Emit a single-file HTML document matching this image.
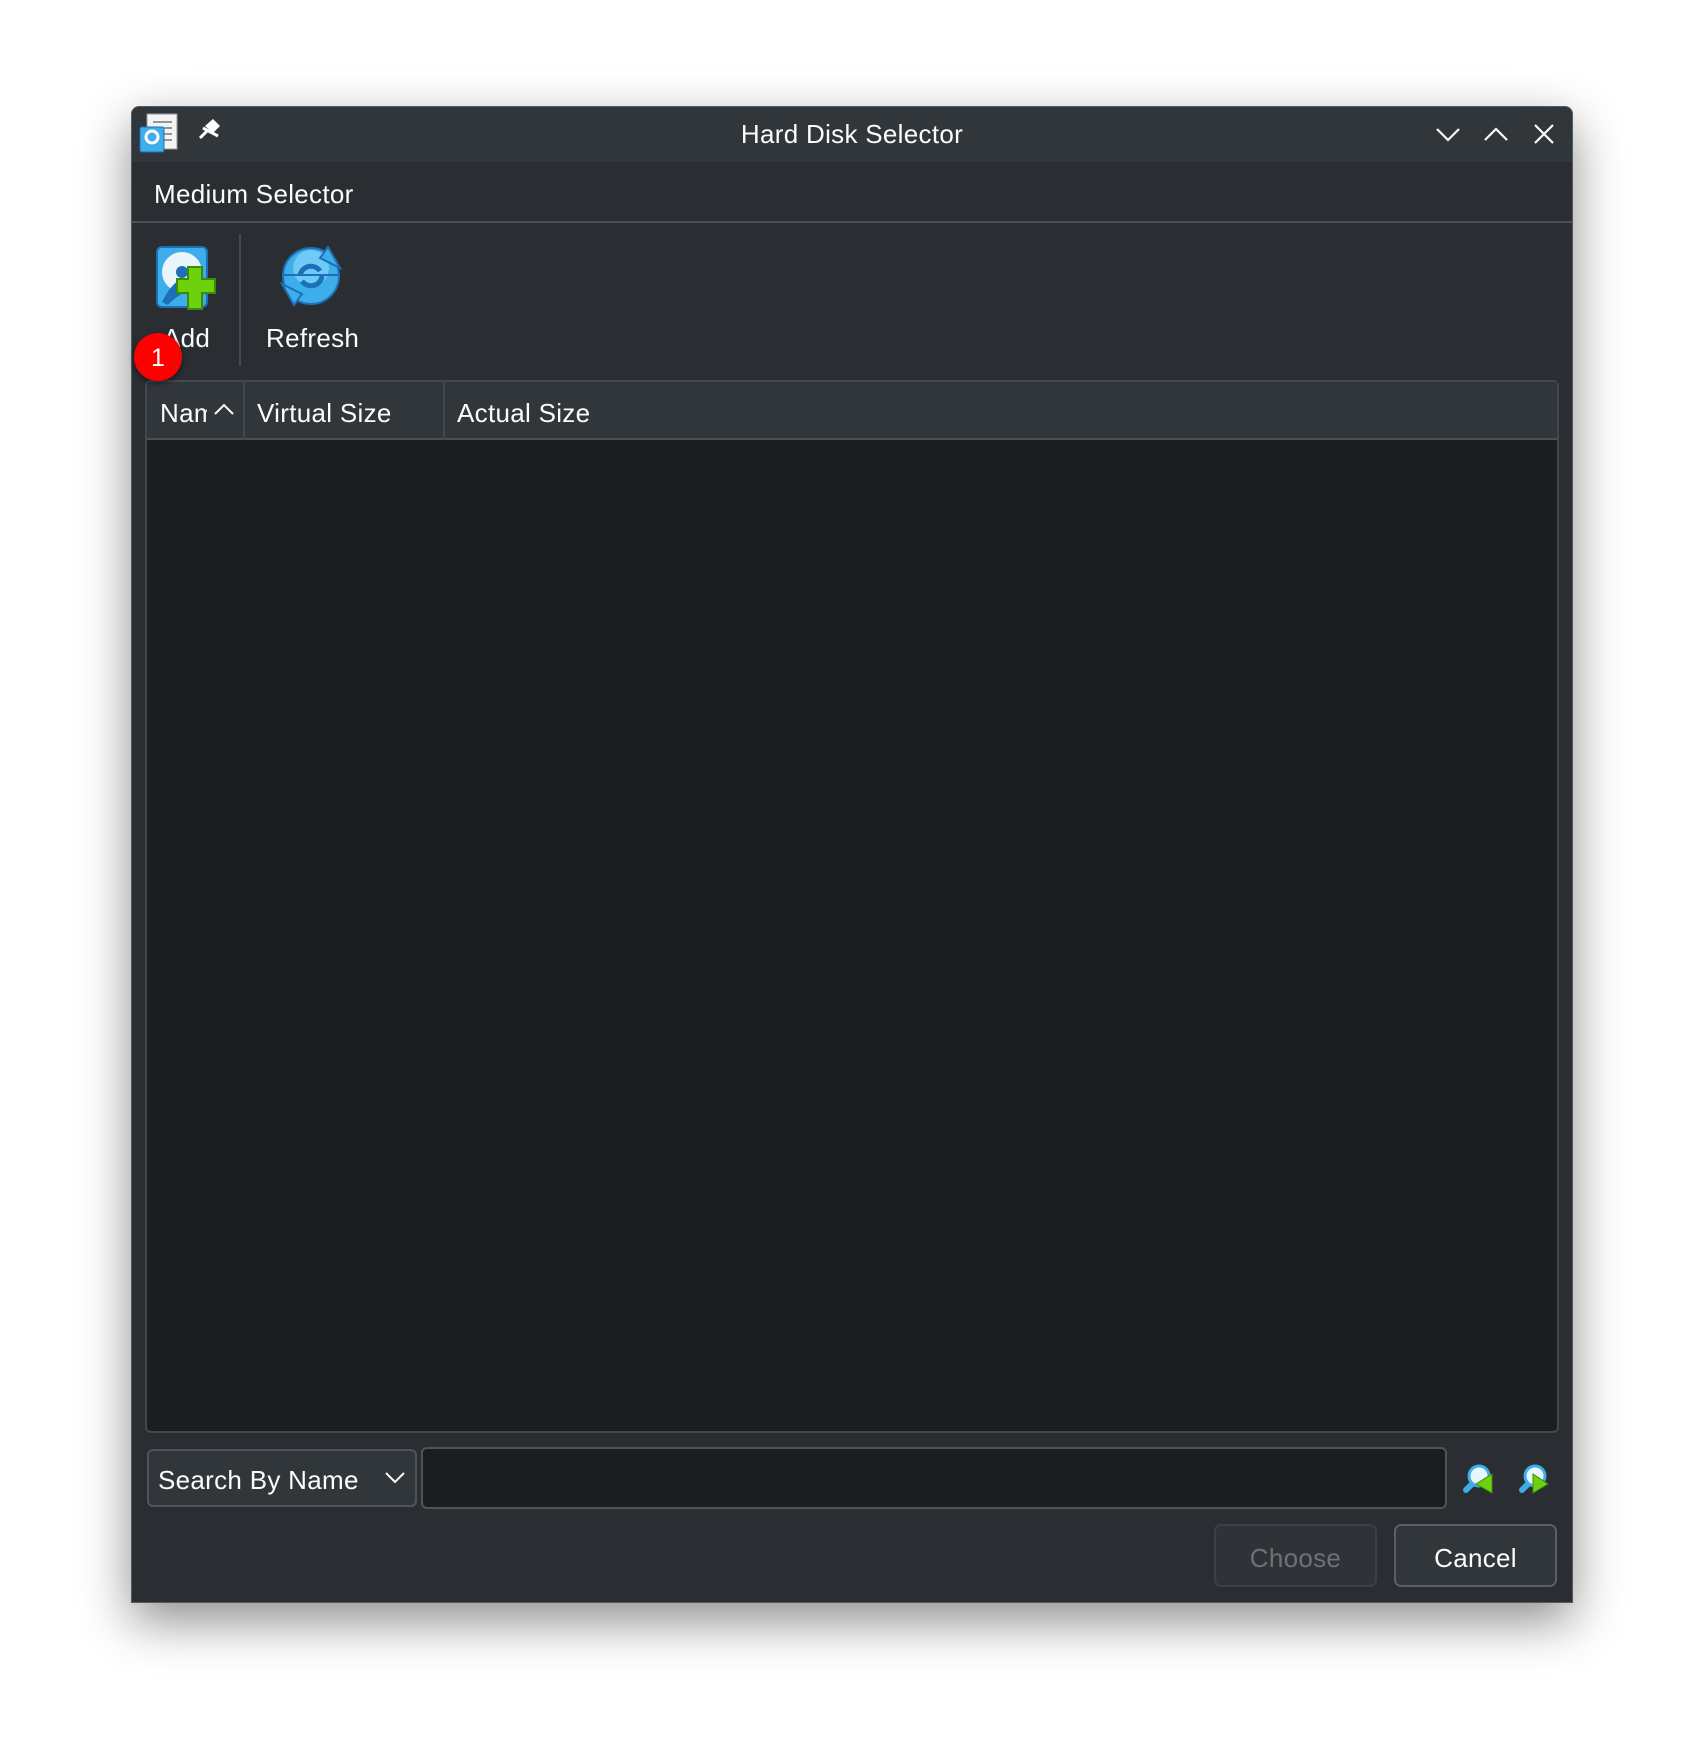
<!DOCTYPE html>
<html><head><meta charset="utf-8"><style>
*{box-sizing:border-box;margin:0;padding:0}
body{width:1704px;height:1758px;background:#fff;position:relative;overflow:hidden;font-family:"Liberation Sans","DejaVu Sans",sans-serif;color:#fcfcfc}
.a{position:absolute}
.win{left:131px;top:106px;width:1442px;height:1497px;background:#2a2e32;border:1px solid #555a5f;border-radius:8px 8px 0 0;box-shadow:0 18px 50px rgba(0,0,0,.45)}
.t{font-size:26px;white-space:nowrap;line-height:1;letter-spacing:.3px}
</style></head><body>
<div class="a win"></div>
<div class="a" style="left:132px;top:107px;width:1440px;height:55px;background:#31363b;border-radius:7px 7px 0 0"></div>
<div class="a t" style="left:0;width:1704px;text-align:center;top:121px;">Hard Disk Selector</div>
<div class="a t" style="left:154px;top:181px">Medium Selector</div>
<div class="a" style="left:132px;top:221px;width:1440px;height:2px;background:#4a4f54"></div>
<div class="a" style="left:239px;top:234px;width:2px;height:132px;background:#43484d"></div>
<div class="a t" style="left:163px;top:325px">Add</div>
<div class="a t" style="left:266px;top:325px">Refresh</div>
<!-- table -->
<div class="a" style="left:145px;top:380px;width:1414px;height:1053px;background:#1b1e20;border:2px solid #43484d;border-radius:6px"></div>
<div class="a" style="left:147px;top:382px;width:1410px;height:58px;background:#31363b;border-bottom:2px solid #4a4f54"></div>
<div class="a" style="left:243px;top:382px;width:2px;height:58px;background:#43484d"></div>
<div class="a" style="left:443px;top:382px;width:2px;height:58px;background:#43484d"></div>
<div class="a t" style="left:160px;top:400px;width:47px;overflow:hidden">Name</div>
<div class="a t" style="left:257px;top:400px">Virtual Size</div>
<div class="a t" style="left:457px;top:400px">Actual Size</div>
<!-- bottom -->
<div class="a" style="left:147px;top:1449px;width:270px;height:58px;background:#31363b;border:2px solid #4f5459;border-radius:6px"></div>
<div class="a t" style="left:158px;top:1467px">Search By Name</div>
<div class="a" style="left:421px;top:1447px;width:1026px;height:62px;background:#1b1e20;border:2px solid #4f5459;border-radius:6px"></div>
<div class="a" style="left:1214px;top:1524px;width:163px;height:63px;background:#2f3338;border:2px solid #3b4045;border-radius:7px"></div>
<div class="a t" style="left:1214px;width:163px;text-align:center;top:1545px;color:#6e7175">Choose</div>
<div class="a" style="left:1394px;top:1524px;width:163px;height:63px;background:#31363b;border:2px solid #5a5f64;border-radius:7px"></div>
<div class="a t" style="left:1394px;width:163px;text-align:center;top:1545px">Cancel</div>
<svg class="a" style="left:0;top:0" width="1704" height="1758">
 <rect x="147" y="114" width="30" height="35" fill="#f4f4f4" stroke="#999"/>
 <g stroke="#777" stroke-width="1.5"><line x1="153" y1="122" x2="172" y2="122"/><line x1="160" y1="128" x2="172" y2="128"/><line x1="162" y1="134" x2="172" y2="134"/><line x1="162" y1="140" x2="172" y2="140"/></g>
 <rect x="140" y="127" width="24" height="25" rx="2" fill="#3daee9" stroke="#1d6fb8"/>
 <circle cx="152" cy="137" r="6" fill="none" stroke="#fff" stroke-width="3"/>
 <path d="M200 138 L208 130" stroke="#fff" stroke-width="3"/>
 <path d="M205 126 L213 119 L220 126 L213 133 Z" fill="#fff"/>
 <path d="M203 128 L218 136" stroke="#fff" stroke-width="3"/>
 <g stroke="#fcfcfc" stroke-width="2.2" fill="none">
  <path d="M1437 129 L1448 140 L1459 129"/>
  <path d="M1485 140 L1496 129 L1507 140"/>
  <path d="M1535 125 L1553 143 M1553 125 L1535 143"/>
 </g>
 <rect x="157" y="247" width="50" height="60" rx="5" fill="#3daee9" stroke="#1d6fb8" stroke-width="2"/>
 <circle cx="182" cy="272" r="20" fill="#e9f4fb"/>
 <circle cx="182" cy="272" r="6" fill="#1d6fb8"/>
 <path d="M162 302 Q170 285 182 278 L188 290 Q175 297 168 305 Z" fill="#1d6fb8"/>
 <path d="M188 267 h14 v12 h13 v14 h-13 v16 h-14 v-16 h-11 v-14 h11 z" fill="#6cd20e" stroke="#3b8a08" stroke-width="2"/>
 <circle cx="311" cy="276" r="28" fill="#3daee9" stroke="#1d6fb8" stroke-width="2"/>
 <circle cx="311" cy="268" r="18" fill="#8fdcff" opacity=".6"/>
 <path d="M300 276 a11 11 0 0 1 20 -5 M322 276 a11 11 0 0 1 -20 5" stroke="#1d6fb8" stroke-width="5" fill="none"/>
 <line x1="282" y1="275" x2="340" y2="275" stroke="#1d6fb8" stroke-width="2"/>
 <path d="M328 247 L340 268 L320 258 Z" fill="#3daee9" stroke="#1d6fb8" stroke-width="2"/>
 <path d="M294 305 L282 284 L302 294 Z" fill="#3daee9" stroke="#1d6fb8" stroke-width="2"/>
 <circle cx="158" cy="357" r="24" fill="#f00" filter="drop-shadow(0 2px 3px rgba(0,0,0,.5))"/>
 <text x="158" y="366" font-size="25" text-anchor="middle" fill="#fff" font-family="Liberation Sans">1</text>
 <path d="M215 414 L224 405 L233 414" stroke="#fcfcfc" stroke-width="2" fill="none"/>
 <path d="M386 1473 L395 1482 L404 1473" stroke="#fcfcfc" stroke-width="2" fill="none"/>
 <g>
  <line x1="1466" y1="1490" x2="1476" y2="1480" stroke="#3daee9" stroke-width="6" stroke-linecap="round"/>
  <circle cx="1479" cy="1476" r="10" fill="#e8f6fd" stroke="#3daee9" stroke-width="3"/>
  <path d="M1492 1474 L1492 1493 L1476 1484 Z" fill="#6cd20e" stroke="#3b8a08"/>
  <line x1="1522" y1="1490" x2="1532" y2="1480" stroke="#3daee9" stroke-width="6" stroke-linecap="round"/>
  <circle cx="1535" cy="1476" r="10" fill="#e8f6fd" stroke="#3daee9" stroke-width="3"/>
  <path d="M1533 1474 L1533 1493 L1548 1484 Z" fill="#6cd20e" stroke="#3b8a08"/>
 </g>
</svg>
</body></html>
